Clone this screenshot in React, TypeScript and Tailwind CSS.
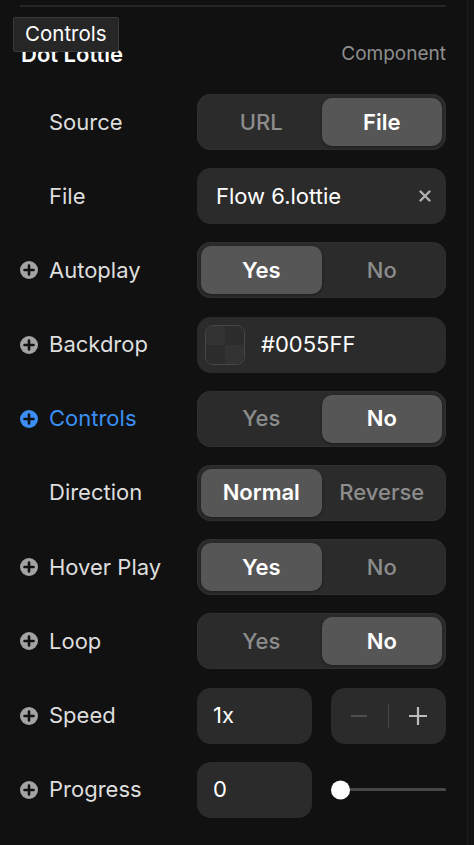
import React from 'react';

type Seg = { options: string[]; active: number };

function PlusIcon({ blue }: { blue?: boolean }) {
  return (
    <svg width="18" height="18" viewBox="0 0 18 18" className="shrink-0">
      <circle cx="9" cy="9" r="9" fill={blue ? '#3b8ef3' : '#a3a3a3'} />
      <path d="M9 4.5v9M4.5 9h9" stroke="#111111" strokeWidth="2.6" strokeLinecap="round" />
    </svg>
  );
}

function Segmented({ options, active }: Seg) {
  return (
    <div className="flex h-full w-full rounded-[14px] bg-[#2b2b2b] p-[4px] shadow-[inset_0_0_0_1px_#2f2f2f]">
      {options.map((o, i) => (
        <div
          key={o}
          className={
            i === active
              ? 'flex flex-1 items-center justify-center rounded-[10px] bg-[#565656] text-[22px] font-semibold text-white shadow-[0_1px_3px_rgba(0,0,0,0.35)]'
              : 'flex flex-1 items-center justify-center text-[22px] font-medium text-[#8c8c8c]'
          }
        >
          {o}
        </div>
      ))}
    </div>
  );
}

function Row({
  label,
  plus,
  blue,
  children,
}: {
  label: string;
  plus?: boolean;
  blue?: boolean;
  children: React.ReactNode;
}) {
  return (
    <div className="flex h-[56px] items-center">
      <div className="flex w-[197px] items-center pl-[20px]">
        <div className="w-[29px]">{plus && <PlusIcon blue={blue} />}</div>
        <span className={`text-[22px] ${blue ? 'text-[#3b8ef3]' : 'text-[#dedede]'}`}>{label}</span>
      </div>
      <div className="flex h-full w-[249px]">{children}</div>
    </div>
  );
}

export default function App() {
  return (
    <div
      className="relative flex h-[845px] w-[474px] overflow-hidden bg-[#111111]"
      style={{ fontFamily: 'Inter, "Noto Sans", sans-serif' }}
    >
      <div className="flex w-[467px] flex-col">
        <div className="mx-[20px] mt-[5px] h-[2px] w-[426px] bg-[#262626]" />

        {/* header */}
        <div className="flex h-[87px] items-start justify-between pl-[21px] pr-[21px] pt-[31px]">
          <span className="text-[22px] font-semibold text-white">Dot Lottie</span>
          <span className="pt-[2px] text-[19px] text-[#8f8f8f]">Component</span>
        </div>

        <div className="flex flex-col gap-[18.2px]">
          <Row label="Source">
            <Segmented options={['URL', 'File']} active={1} />
          </Row>
          <Row label="File">
            <div className="flex w-full items-center justify-between rounded-[14px] bg-[#2b2b2b] pl-[19px] pr-[15px]">
              <span className="text-[22px] text-white">Flow 6.lottie</span>
              <svg width="12" height="12" viewBox="0 0 12 12">
                <path d="M1.5 1.5l9 9M10.5 1.5l-9 9" stroke="#b0b0b0" strokeWidth="2.4" strokeLinecap="round" />
              </svg>
            </div>
          </Row>
          <Row label="Autoplay" plus>
            <Segmented options={['Yes', 'No']} active={0} />
          </Row>
          <Row label="Backdrop" plus>
            <div className="flex w-full items-center gap-[16px] rounded-[14px] bg-[#2b2b2b] pl-[8px]">
              <div className="grid h-[40px] w-[40px] grid-cols-2 grid-rows-2 overflow-hidden rounded-[8px] border-[1.5px] border-[#464646]">
                <div className="bg-[#333333]" />
                <div className="bg-[#2c2c2c]" />
                <div className="bg-[#2c2c2c]" />
                <div className="bg-[#333333]" />
              </div>
              <span className="text-[22px] text-white">#0055FF</span>
            </div>
          </Row>
          <Row label="Controls" plus blue>
            <Segmented options={['Yes', 'No']} active={1} />
          </Row>
          <Row label="Direction">
            <Segmented options={['Normal', 'Reverse']} active={0} />
          </Row>
          <Row label="Hover Play" plus>
            <Segmented options={['Yes', 'No']} active={0} />
          </Row>
          <Row label="Loop" plus>
            <Segmented options={['Yes', 'No']} active={1} />
          </Row>
          <Row label="Speed" plus>
            <div className="flex w-full gap-[19px]">
              <div className="flex w-[115px] items-center rounded-[14px] bg-[#2b2b2b] pl-[16px] text-[22px] text-white">
                1x
              </div>
              <div className="flex w-[115px] items-center justify-center rounded-[14px] bg-[#2b2b2b]">
                <div className="flex flex-1 items-center justify-center">
                  <svg width="18" height="18" viewBox="0 0 18 18">
                    <path d="M1 9h16" stroke="#4e4e4e" strokeWidth="2.2" />
                  </svg>
                </div>
                <div className="h-[24px] w-[1.5px] bg-[#444444]" />
                <div className="flex flex-1 items-center justify-center">
                  <svg width="20" height="20" viewBox="0 0 20 20">
                    <path d="M10 1v18M1 10h18" stroke="#bdbdbd" strokeWidth="2.2" />
                  </svg>
                </div>
              </div>
            </div>
          </Row>
          <Row label="Progress" plus>
            <div className="flex w-full gap-[19px]">
              <div className="flex w-[115px] items-center rounded-[14px] bg-[#2b2b2b] pl-[16px] text-[22px] text-white">
                0
              </div>
              <div className="relative flex w-[115px] items-center">
                <div className="ml-[9px] h-[3px] flex-1 rounded-full bg-[#484848]" />
                <div className="absolute left-0 top-1/2 h-[19px] w-[19px] -translate-y-1/2 rounded-full bg-white" />
              </div>
            </div>
          </Row>
        </div>
      </div>
      <div className="h-full w-[7px] border-l border-[#1c1c1c] bg-[#131313]" />

      {/* tooltip */}
      <div className="absolute left-[13px] top-[17px] flex h-[35px] w-[106px] items-center rounded-[2px] border border-[#3a3a3a] bg-[#262626] pl-[11px] text-[20.5px] text-white">
        Controls
      </div>
    </div>
  );
}
